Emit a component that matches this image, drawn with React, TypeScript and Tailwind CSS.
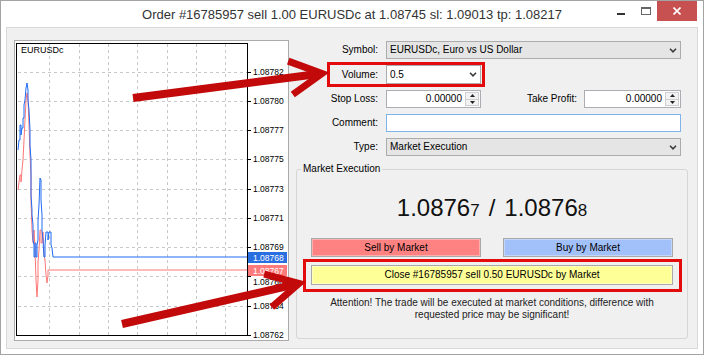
import React from "react";

function Chevron() {
  return (
    <svg width="8" height="5" viewBox="0 0 8 5" className="shrink-0">
      <path d="M1 0.8 L4 3.8 L7 0.8" fill="none" stroke="#3c3c3c" strokeWidth="1.6" />
    </svg>
  );
}

function Spinner() {
  return (
    <div className="w-[14px] my-[1px] mr-[1px] flex flex-col border border-[#cfcfcf] bg-[#f3f3f3]">
      <div className="flex-1 flex items-center justify-center border-b border-[#cfcfcf]">
        <svg width="5" height="3" viewBox="0 0 5 3">
          <path d="M0 3 L2.5 0 L5 3 Z" fill="#222" />
        </svg>
      </div>
      <div className="flex-1 flex items-center justify-center">
        <svg width="5" height="3" viewBox="0 0 5 3">
          <path d="M0 0 L2.5 3 L5 0 Z" fill="#222" />
        </svg>
      </div>
    </div>
  );
}

const gridX = [49.5, 79.5, 108.5, 137.5, 167.5, 196.5, 225.5];
const levels: [number, string][] = [
  [71.7, "1.08782"],
  [100.95, "1.08780"],
  [130.2, "1.08777"],
  [159.45, "1.08775"],
  [188.7, "1.08773"],
  [217.95, "1.08771"],
  [247.2, "1.08769"],
  [276.45, "1.08766"],
  [305.7, "1.08764"],
  [334.95, "1.08762"],
];

const blue =
  "18,150 19,140 20,140 20,125 21,125 21,135 22,128 23,128 23,118 24,118 24,105 25,100 26,88 27,83 28,90 28,100 29,110 30,130 30,145 31,160 31,195 32,210 32,215 33,225 33,240 34,245 34,257 35,257 35,243 36,243 36,257 37,257 37,245 38,240 38,220 39,205 40,178 41,180 41,200 42,215 42,230 43,240 44,257 45,257 45,245 46,232 48,232 48,240 49,232 51,232 51,245 52,248 53,257 247,257";
const red =
  "18,190 19,182 20,175 21,175 21,182 22,170 23,160 24,140 25,120 26,100 27,93 28,100 29,125 30,155 31,175 31,200 32,230 33,243 34,243 34,230 35,250 36,280 37,297 38,280 38,262 39,250 40,230 41,230 41,243 42,243 43,232 44,255 45,260 46,275 47,283 48,275 48,270 247,270";

function Chart() {
  return (
    <div className="w-[275px] h-[301px] border border-[#ababab] bg-white shrink-0">
      <svg width="273" height="299" viewBox="0 0 273 299" style={{ fontFamily: '"Liberation Sans", Arial, sans-serif' }}>
        <g transform="translate(-15,-41)">
          {gridX.map((x) => (
            <line key={x} x1={x} y1={44} x2={x} y2={335} stroke="#c8c8c8" strokeDasharray="3 3" />
          ))}
          {levels.slice(0, 9).map(([y]) => (
            <line key={y} x1={18} y1={Math.round(y) + 0.5} x2={247} y2={Math.round(y) + 0.5} stroke="#c8c8c8" strokeDasharray="3 3" />
          ))}
          <polyline points={red} fill="none" stroke="#ff7777" strokeWidth="1" />
          <polyline points={blue} fill="none" stroke="#1f6cf5" strokeWidth="1" />
          <rect x={16.5} y={43.5} width={231} height={292} fill="none" stroke="#000" />
          {levels.map(([y, t]) => (
            <g key={t}>
              <line x1={247} y1={Math.round(y) + 0.5} x2={251} y2={Math.round(y) + 0.5} stroke="#000" />
              {t !== "1.08766" && (
                <text x={253} y={y + 3} fontSize="8.5" fill="#000">
                  {t}
                </text>
              )}
            </g>
          ))}
          <rect x={248} y={252} width={39} height={11} fill="#2a6fdf" />
          <text x={253} y={260.5} fontSize="8.5" fill="#fff">
            1.08768
          </text>
          <rect x={248} y={265} width={39} height={11} fill="#ff7b7b" />
          <text x={253} y={273.5} fontSize="8.5" fill="#fff">
            1.08767
          </text>
          <text x={253} y={284.5} fontSize="8.5" fill="#000">
            1.08766
          </text>
          <text x={21} y={53} fontSize="9" fill="#000">
            EURUSDc
          </text>
        </g>
      </svg>
    </div>
  );
}

export default function App() {
  return (
    <div className="relative w-[704px] h-[355px] bg-white border border-[#a3a3a3] flex flex-col overflow-hidden font-['Liberation_Sans',Arial,sans-serif] text-black">
      {/* title bar */}
      <div className="h-[26px] shrink-0 grid grid-cols-[1fr_auto_1fr]">
        <div />
        <div className="text-[13px] leading-[26px] text-[#333] pt-[1px]">
          Order #16785957 sell 1.00 EURUSDc at 1.08745 sl: 1.09013 tp: 1.08217
        </div>
        <div className="flex justify-end items-start pr-[6px]">
          <div className="w-[8px] h-[2px] mt-[12px] bg-[#333]" />
          <div className="ml-[16px] w-[10px] h-[8px] mt-[6px] border border-[#666] border-t-2" />
          <div className="ml-[6px] w-[40px] h-[20px] bg-[#c75050] flex items-center justify-center">
            <svg width="8" height="8" viewBox="0 0 8 8">
              <path d="M0.5 0.5 L7.5 7.5 M7.5 0.5 L0.5 7.5" stroke="#fff" strokeWidth="1.6" />
            </svg>
          </div>
        </div>
      </div>

      {/* body */}
      <div className="flex-1 mx-[5px] mb-[5px] bg-[#f0f0f0] border border-[#d9d9d9] flex pl-[7px] pt-[12px] text-[10px] leading-[12px]">
        <Chart />

        <div className="ml-[7px] w-[392px] flex flex-col">
          <div className="flex flex-col gap-[6px] mt-[1px] pr-[7px]">
            <div className="flex items-center h-[18px]">
              <div className="w-[82px] text-right">Symbol:</div>
              <div className="ml-[8px] flex-1 h-full flex items-center border border-[#acacac] bg-[#e5e5e5] px-[3px]">
                <span className="flex-1">EURUSDc, Euro vs US Dollar</span>
                <Chevron />
              </div>
            </div>

            <div className="relative flex items-center h-[19px]">
              <div className="w-[82px] text-right">Volume:</div>
              <div className="ml-[8px] w-[95px] h-full flex items-center border border-[#acacac] bg-white px-[3px]">
                <span className="flex-1">0.5</span>
                <Chevron />
              </div>
              <div className="absolute left-[31px] top-[-3px] w-[158px] h-[25px] border-[3px] border-[#e30c0c]" />
            </div>

            <div className="flex items-center h-[18px]">
              <div className="w-[82px] text-right">Stop Loss:</div>
              <div className="ml-[8px] w-[95px] h-full flex border border-[#abadb3] bg-white">
                <span className="flex-1 text-right pr-[3px] self-center">0.00000</span>
                <Spinner />
              </div>
              <div className="flex-1 text-right">Take Profit:</div>
              <div className="ml-[7px] w-[97px] h-full flex border border-[#abadb3] bg-white">
                <span className="flex-1 text-right pr-[3px] self-center">0.00000</span>
                <Spinner />
              </div>
            </div>

            <div className="flex items-center h-[18px]">
              <div className="w-[82px] text-right">Comment:</div>
              <div className="ml-[8px] flex-1 h-full border border-[#7eb4ea] bg-white" />
            </div>

            <div className="flex items-center h-[18px]">
              <div className="w-[82px] text-right">Type:</div>
              <div className="ml-[8px] flex-1 h-full flex items-center border border-[#acacac] bg-[#e5e5e5] px-[3px]">
                <span className="flex-1">Market Execution</span>
                <Chevron />
              </div>
            </div>
          </div>

          <fieldset className="mt-[7px] border border-[#d6d6d6] rounded-[3px]">
            <legend className="ml-[4px] px-[2px] text-[10px] leading-[12px]">Market Execution</legend>
            <div className="px-[14px] pb-[17px]">
              <div className="mt-[19px] h-[28px] text-center text-[24px] leading-[28px] text-[#111]">
                1.0876<span className="text-[17px]">7</span>
                <span className="mx-[9px]">/</span>
                1.0876<span className="text-[17px]">8</span>
              </div>
              <div className="mt-[16px] flex justify-between">
                <div className="w-[170px] h-[19px] flex items-center justify-center border border-[#a9a9a9] bg-[#ff8282] shadow-[inset_0_0_0_1px_rgba(255,255,255,0.35)]">
                  Sell by Market
                </div>
                <div className="w-[170px] h-[19px] flex items-center justify-center border border-[#a9a9a9] bg-[#a2c0fa] shadow-[inset_0_0_0_1px_rgba(255,255,255,0.35)]">
                  Buy by Market
                </div>
              </div>
              <div className="relative mt-[8px]">
                <div className="h-[20px] flex items-center justify-center border border-[#a9a9a9] bg-[#ffff98] shadow-[inset_0_0_0_1px_rgba(255,255,255,0.4)]">
                  Close #16785957 sell 0.50 EURUSDc by Market
                </div>
                <div className="absolute left-[-8px] top-[-6px] w-[379px] h-[33px] border-[3px] border-[#e30c0c]" />
              </div>
              <div className="mt-[12px] text-center leading-[12px] text-[#222]">
                Attention! The trade will be executed at market conditions, difference with
                <br />
                requested price may be significant!
              </div>
            </div>
          </fieldset>
        </div>
      </div>

      {/* annotation arrows */}
      <svg className="absolute -left-px -top-px pointer-events-none" width="704" height="355" viewBox="0 0 704 355">
        <g stroke="#c20a0a" fill="none" strokeWidth="8">
          <line x1={133} y1={98} x2={316} y2={74.3} />
          <polyline points="288.2,61.1 322,73.5 292.8,94.5" strokeLinejoin="miter" strokeMiterlimit={10} strokeWidth="7" />
          <line x1={122} y1={324} x2={293} y2={284.9} />
          <polyline points="264.2,274.1 299,283.5 271.8,307.1" strokeLinejoin="miter" strokeMiterlimit={10} strokeWidth="7" />
        </g>
      </svg>
    </div>
  );
}
